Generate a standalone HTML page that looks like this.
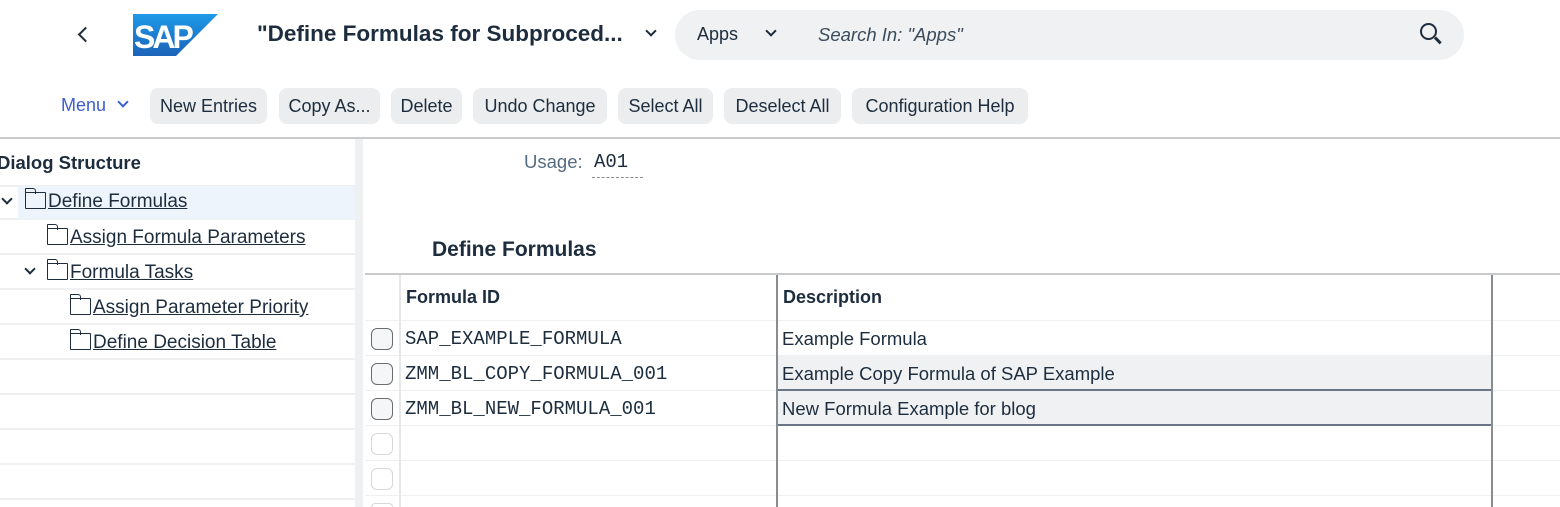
<!DOCTYPE html>
<html style="overflow:hidden;width:1560px;height:507px"><head><meta charset="utf-8"><style>
*{margin:0;padding:0;box-sizing:border-box}
body{width:1560px;height:507px;overflow:hidden;background:#fff;font-family:"Liberation Sans",sans-serif;color:#1d2d3e;position:relative}
.a{position:absolute;white-space:nowrap}
.btn{position:absolute;top:88px;height:36px;background:#ebedee;border-radius:8px;font-size:18px;line-height:36px;text-align:center;color:#1d2d3e}
.row{position:absolute;left:0;width:355px;height:35px;border-bottom:2px solid #eef0f1}
.lnk{text-decoration:underline;font-size:19px}
.fold{display:inline-block;width:21px;height:17px;border:1.5px solid #1d2d3e;border-radius:1px;position:relative;vertical-align:-2px;margin-right:2px}
.fold:before{content:"";position:absolute;left:-1.5px;top:-5px;width:9px;height:5px;border:1.5px solid #1d2d3e;border-bottom:none;border-radius:1px 3px 0 0}
.chev{display:block;width:9px;height:9px;border-right:2.5px solid #1d2d3e;border-bottom:2.5px solid #1d2d3e;transform:rotate(45deg)}
.tr{position:absolute;left:365px;width:1195px;height:35px;border-bottom:1.5px solid #eef0f1}
.cb{position:absolute;left:371px;width:22px;height:22px;border:1.5px solid #6a6d70;border-radius:6px;background:#f5f6f7}
.cb.l{border-color:#d5d7d9;background:#fff}
.mono{font-family:"Liberation Mono",monospace;font-size:19px}
.desc{font-size:18.5px}
</style></head><body>
<!-- top bar -->
<div class="a" style="left:80px;top:29px;width:11px;height:11px;border-left:2.5px solid #1d2d3e;border-bottom:2.5px solid #1d2d3e;transform:rotate(45deg)"></div>
<svg class="a" style="left:133px;top:14px" width="85" height="42" viewBox="0 0 85 42"><defs><linearGradient id="g" x1="0" y1="0" x2="0" y2="1"><stop offset="0" stop-color="#1f9ae8"/><stop offset="1" stop-color="#1b63b8"/></linearGradient></defs><polygon points="0,0 85,0 43,42 0,42" fill="url(#g)"/><text x="1" y="34" font-family="Liberation Sans" font-weight="bold" font-size="32" fill="#fff" letter-spacing="-3">SAP</text></svg>
<div class="a" style="left:257px;top:21px;font-size:22.5px;font-weight:bold;color:#1d2d3e">"Define Formulas for Subproced...</div>
<div class="a" style="left:647px;top:27px"><span class="chev" style="width:8px;height:8px;border-width:2px"></span></div>
<div class="a" style="left:675px;top:10px;width:789px;height:50px;background:#eff1f2;border-radius:25px"></div>
<div class="a" style="left:697px;top:24px;font-size:18px">Apps</div>
<div class="a" style="left:767px;top:27px"><span class="chev" style="width:8px;height:8px;border-width:2px"></span></div>
<div class="a" style="left:818px;top:24px;font-size:18.5px;font-style:italic;color:#3b4b5c">Search In: "Apps"</div>
<div class="a" style="left:1420px;top:23px;width:17px;height:17px;border:2.5px solid #1d2d3e;border-radius:50%"></div>
<div class="a" style="left:1434px;top:39px;width:8px;height:2.5px;background:#1d2d3e;transform:rotate(45deg)"></div>
<!-- toolbar -->
<div class="a" style="left:61px;top:95px;font-size:18px;color:#3c5ed0">Menu</div>
<div class="a" style="left:119px;top:98px"><span class="chev" style="width:8px;height:8px;border-color:#3c5ed0;border-width:2px"></span></div>
<div class="btn" style="left:150px;width:117px">New Entries</div>
<div class="btn" style="left:279px;width:101px">Copy As...</div>
<div class="btn" style="left:391px;width:71px">Delete</div>
<div class="btn" style="left:473px;width:134px">Undo Change</div>
<div class="btn" style="left:618px;width:95px">Select All</div>
<div class="btn" style="left:724px;width:117px">Deselect All</div>
<div class="btn" style="left:852px;width:176px">Configuration Help</div>
<div class="a" style="left:0;top:137px;width:1560px;height:2px;background:#c8cacc"></div>
<!-- left panel -->
<div class="a" style="left:355px;top:139px;width:8px;height:368px;background:#eef0f1"></div>
<div class="a" style="left:-3px;top:152px;font-size:18.5px;font-weight:bold">Dialog Structure</div>
<div class="row" style="top:185px;border-top:2px solid #eef0f1"></div>
<div class="a" style="left:18px;top:186px;width:337px;height:33px;background:#eef4fb"></div>
<div class="row" style="top:220px"></div>
<div class="row" style="top:255px"></div>
<div class="row" style="top:290px"></div>
<div class="row" style="top:325px"></div>
<div class="row" style="top:360px"></div>
<div class="row" style="top:395px"></div>
<div class="row" style="top:430px"></div>
<div class="row" style="top:465px"></div>
<div class="a" style="left:3px;top:195px"><span class="chev" style="width:8px;height:8px;border-width:2px"></span></div>
<div class="a" style="left:25px;top:191px"><span class="fold"></span><span class="lnk">Define Formulas</span></div>
<div class="a" style="left:47px;top:227px"><span class="fold"></span><span class="lnk">Assign Formula Parameters</span></div>
<div class="a" style="left:26px;top:265px"><span class="chev" style="width:8px;height:8px;border-width:2px"></span></div>
<div class="a" style="left:47px;top:262px"><span class="fold"></span><span class="lnk">Formula Tasks</span></div>
<div class="a" style="left:70px;top:297px"><span class="fold"></span><span class="lnk">Assign Parameter Priority</span></div>
<div class="a" style="left:70px;top:332px"><span class="fold"></span><span class="lnk">Define Decision Table</span></div>
<!-- right -->
<div class="a" style="left:524px;top:151px;font-size:18.5px;color:#556b82">Usage:</div>
<div class="a mono" style="left:594px;top:151px">A01</div>
<div class="a" style="left:592px;top:177px;width:51px;border-top:1.5px dashed #8a8d90"></div>
<div class="a" style="left:432px;top:238px;font-size:21px;font-weight:bold">Define Formulas</div>
<div class="a" style="left:365px;top:273px;width:1195px;height:2px;background:#c8cacc"></div>
<div class="tr" style="top:275px;height:46px"></div>
<div class="a" style="left:406px;top:287px;font-size:18px;font-weight:bold">Formula ID</div>
<div class="a" style="left:783px;top:287px;font-size:18px;font-weight:bold">Description</div>
<div class="tr" style="top:321px"></div>
<div class="tr" style="top:356px"></div>
<div class="tr" style="top:391px"></div>
<div class="tr" style="top:426px"></div>
<div class="tr" style="top:461px"></div>
<div class="a" style="left:777px;top:356px;width:714px;height:70px;background:#eff1f2"></div>
<div class="a" style="left:777px;top:389px;width:714px;height:2px;background:#6a7585"></div>
<div class="a" style="left:777px;top:424px;width:714px;height:2px;background:#6a7585"></div>
<div class="a" style="left:399px;top:275px;width:1.5px;height:232px;background:#e5e7e9"></div>
<div class="a" style="left:776px;top:275px;width:1.5px;height:232px;background:#8a8d90"></div>
<div class="a" style="left:1491px;top:275px;width:1.5px;height:232px;background:#8a8d90"></div>
<div class="cb" style="top:328px"></div>
<div class="cb" style="top:363px"></div>
<div class="cb" style="top:398px"></div>
<div class="cb l" style="top:433px"></div>
<div class="cb l" style="top:468px"></div>
<div class="cb l" style="top:503px;height:4px;border-bottom:none;border-radius:6px 6px 0 0"></div>
<div class="a mono" style="left:405px;top:328px">SAP_EXAMPLE_FORMULA</div>
<div class="a mono" style="left:405px;top:363px">ZMM_BL_COPY_FORMULA_001</div>
<div class="a mono" style="left:405px;top:398px">ZMM_BL_NEW_FORMULA_001</div>
<div class="a desc" style="left:782px;top:328px">Example Formula</div>
<div class="a desc" style="left:782px;top:363px">Example Copy Formula of SAP Example</div>
<div class="a desc" style="left:782px;top:398px">New Formula Example for blog</div>
</body></html>
